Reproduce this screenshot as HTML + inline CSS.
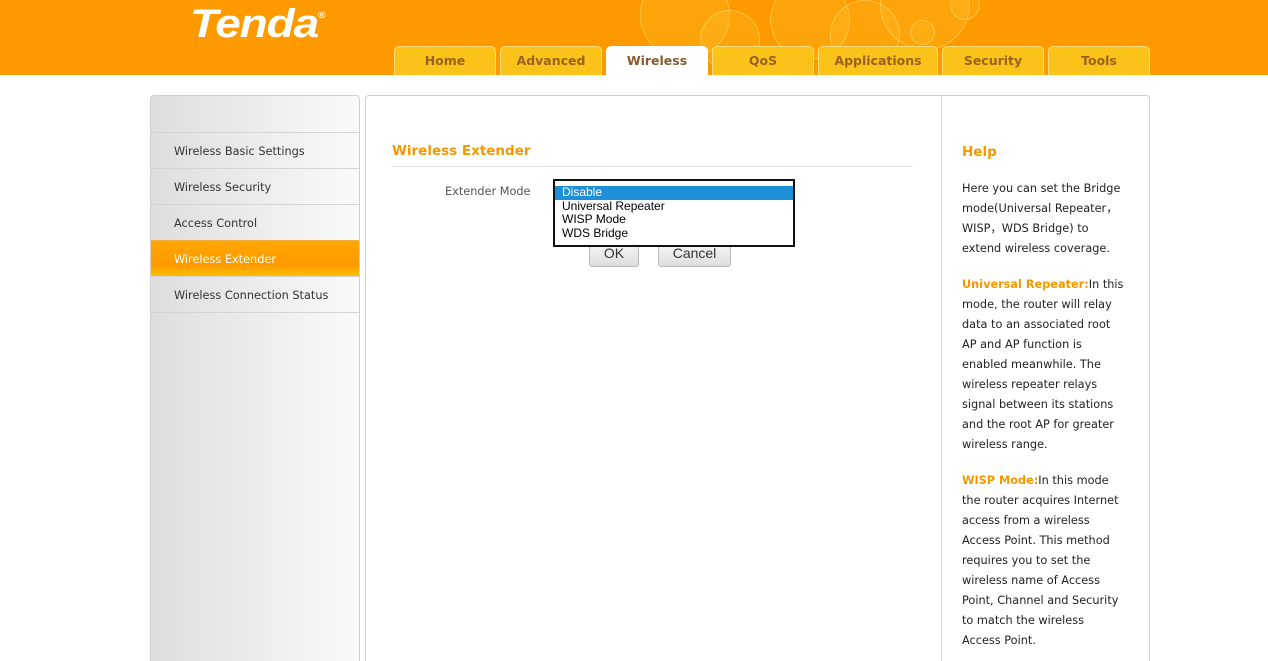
<!DOCTYPE html>
<html><head><meta charset="utf-8"><style>
*{margin:0;padding:0;box-sizing:border-box}
html,body{width:1268px;height:661px;overflow:hidden}
body{background:#fff;font-family:"DejaVu Sans","Liberation Sans",sans-serif;position:relative}
.hdr{position:absolute;left:0;top:0;width:1268px;height:75px;background:#fe9a00;overflow:hidden}
.bub{position:absolute;border-radius:50%;border:1px solid rgba(255,230,120,.45);background:rgba(255,210,60,.18)}
.logo{position:absolute;left:190px;top:2px;font:italic bold 40px "Liberation Sans",sans-serif;color:#fff;letter-spacing:-1px;transform:scaleX(1.15);transform-origin:left}
.logo sup{font-size:9px;font-style:normal;vertical-align:top;position:relative;top:8px}
.tab{position:absolute;top:46px;height:29px;background:#fbc219;border:1px solid #fddc7a;border-bottom:none;border-radius:5px 5px 0 0;color:#9a6220;font:bold 12.5px "DejaVu Sans",sans-serif;text-align:center;line-height:27px}
.tab.on{background:#fff;color:#8a5a2a;border-color:#fff}
.side{position:absolute;left:150px;top:95px;width:210px;height:580px;border:1px solid #d0d0d0;border-radius:4px 4px 0 0;background:linear-gradient(90deg,#dedede,#fafafa)}
.it{position:absolute;left:0;width:208px;height:36px;border-top:1px solid #d4d4d4;font-size:11.3px;color:#333;padding-left:23px;line-height:37px}
.it.on{background:linear-gradient(#ffa600,#fe9a00 70%,#fcc000);color:#fff;border-top-color:#f0b040}
.main{position:absolute;left:365px;top:95px;width:785px;height:580px;border:1px solid #d0d0d0;border-radius:4px 4px 0 0}
.div{position:absolute;left:941px;top:96px;width:1px;height:570px;background:#d8d8d8}
h2{position:absolute;font-size:13.5px;font-weight:bold;color:#f39800}
.help{position:absolute;left:962px;top:179px;width:163px;font-size:11.3px;line-height:20px;color:#222}
.help p{margin-bottom:16px}
.help b{color:#f39800}
.btn{position:absolute;top:240px;height:27px;border:1px solid #bbb;border-radius:3px;background:linear-gradient(#fafafa,#ddd);font:14px "Liberation Sans",sans-serif;color:#333;text-align:center;line-height:25px}
.dd{position:absolute;left:553px;top:179px;width:242px;height:68px;border:2px solid #111;background:#fff;font:12px "Liberation Sans",sans-serif;color:#000}
.dd div{height:13.5px;line-height:13.5px;padding-left:7px}
</style></head><body>
<div class="hdr">
<div class="bub" style="left:640px;top:-30px;width:90px;height:90px"></div>
<div class="bub" style="left:700px;top:10px;width:60px;height:60px"></div>
<div class="bub" style="left:770px;top:-20px;width:80px;height:80px"></div>
<div class="bub" style="left:830px;top:0px;width:70px;height:70px"></div>
<div class="bub" style="left:880px;top:-40px;width:90px;height:90px"></div>
<div class="bub" style="left:910px;top:20px;width:25px;height:25px"></div>
<div class="bub" style="left:950px;top:-10px;width:30px;height:30px"></div>
<div class="logo">Tenda<sup>®</sup></div>
<div class="tab" style="left:394px;width:102px">Home</div>
<div class="tab" style="left:500px;width:102px">Advanced</div>
<div class="tab on" style="left:606px;width:102px">Wireless</div>
<div class="tab" style="left:712px;width:102px">QoS</div>
<div class="tab" style="left:818px;width:120px">Applications</div>
<div class="tab" style="left:942px;width:102px">Security</div>
<div class="tab" style="left:1048px;width:102px">Tools</div>
</div>
<div class="side">
<div class="it" style="top:36px">Wireless Basic Settings</div>
<div class="it" style="top:72px">Wireless Security</div>
<div class="it" style="top:108px">Access Control</div>
<div class="it on" style="top:144px">Wireless Extender</div>
<div class="it" style="top:180px">Wireless Connection Status</div>
<div class="it" style="top:216px;height:1px"></div>
</div>
<div class="main"></div>
<div class="div"></div>
<h2 style="left:392px;top:143px">Wireless Extender</h2>
<div style="position:absolute;left:392px;top:166px;width:521px;height:1px;background:#e4e4e4"></div>
<div style="position:absolute;left:445px;top:185px;font-size:11.3px;color:#555">Extender Mode</div>
<div class="btn" style="left:589px;width:50px">OK</div>
<div class="btn" style="left:658px;width:73px">Cancel</div>
<div class="dd">
<div style="background:#1e90d8;color:#fff;margin-top:5px">Disable</div>
<div>Universal Repeater</div>
<div>WISP Mode</div>
<div>WDS Bridge</div>
</div>
<h2 style="left:962px;top:144px">Help</h2>
<div class="help">
<p>Here you can set the Bridge mode(Universal Repeater，WISP，WDS Bridge) to extend wireless coverage.</p>
<p><b>Universal Repeater:</b>In this mode, the router will relay data to an associated root AP and AP function is enabled meanwhile. The wireless repeater relays signal between its stations and the root AP for greater wireless range.</p>
<p><b>WISP Mode:</b>In this mode the router acquires Internet access from a wireless Access Point. This method requires you to set the wireless name of Access Point, Channel and Security to match the wireless Access Point.</p>
</div>
</body></html>
